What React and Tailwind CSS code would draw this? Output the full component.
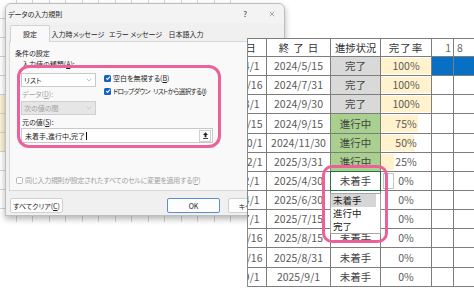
import React from 'react';
import { ChevronDown, X } from 'lucide-react';

const rows = [
  { s: '2024/4/1', e: '2024/5/15', st: '完了', p: '100%', bar: 50, blue: true },
  { s: '2024/5/16', e: '2024/7/31', st: '完了', p: '100%', bar: 50 },
  { s: '2024/8/1', e: '2024/9/30', st: '完了', p: '100%', bar: 50 },
  { s: '2024/7/15', e: '2024/9/15', st: '進行中', p: '75%', bar: 37 },
  { s: '2024/10/1', e: '2024/11/30', st: '進行中', p: '50%', bar: 33 },
  { s: '2024/12/1', e: '2025/3/31', st: '進行中', p: '25%', bar: 13 },
  { s: '2025/2/1', e: '2025/4/30', st: '未着手', p: '0%', bar: 0, sel: true },
  { s: '2025/4/1', e: '2025/6/30', st: '', p: '0%', bar: 0 },
  { s: '2025/7/1', e: '2025/7/15', st: '', p: '0%', bar: 0 },
  { s: '2025/7/16', e: '2025/8/15', st: '未着手', p: '0%', bar: 0 },
  { s: '2025/8/16', e: '2025/8/31', st: '未着手', p: '0%', bar: 0 },
  { s: '2025/9/1', e: '2025/9/1', st: '未着手', p: '0%', bar: 0 },
];

const statusBg = { '完了': 'bg-[#d9d9d9]', '進行中': 'bg-[#a9d08e]', '未着手': 'bg-white', '': 'bg-white' };

const Check = ({ on }) =>
  on ? (
    <span className="w-[7px] h-[7px] rounded-[1.5px] bg-[#1062c4] flex items-center justify-center shrink-0">
      <svg width="6" height="6" viewBox="0 0 10 10">
        <path d="M2 5.2 4.2 7.4 8.3 2.8" fill="none" stroke="#fff" strokeWidth="1.7" />
      </svg>
    </span>
  ) : (
    <span className="w-[7px] h-[7px] rounded-[1.5px] border border-[#b8b8b8] bg-white shrink-0" />
  );

const Key = ({ k }) => (
  <>(<span className="underline">{k}</span>)</>
);

const SheetBehind = () => (
  <div className="w-[247px] h-[222px] overflow-hidden shrink-0">
    {Array.from({ length: 12 }).map((_, r) => (
      <div key={r} className="flex h-[19px]">
        {Array.from({ length: 15 }).map((_, c) => (
          <div
            key={c}
            className={`w-[16.5px] shrink-0 border-r border-b border-[#d4d4d4] ${c === 0 && r > 4 && r < 8 ? 'bg-[#fbf1d3]' : 'bg-white'}`}
          />
        ))}
      </div>
    ))}
  </div>
);

const Table = () => (
  <div className="relative z-10 mt-[38px] flex-1 bg-white border-l border-[#8a8a8a] text-[10.5px] text-[#5a5a5a]">
    <div className="flex h-[19px] border-y border-[#7d7d7d] text-[#333] text-[10.5px]">
      <div className="w-[19px] shrink-0 border-r border-[#7d7d7d] overflow-hidden flex items-center">
        <div className="w-[58px] ml-[-39px] shrink-0 text-center tracking-[4px]">開始日</div>
      </div>
      <div className="w-[64px] shrink-0 border-r border-[#7d7d7d] flex items-center justify-center tracking-[4px] pl-[4px]">終了日</div>
      <div className="w-[50px] shrink-0 border-r border-[#7d7d7d] flex items-center justify-center tracking-[-0.3px]">進捗状況</div>
      <div className="w-[51px] shrink-0 border-r border-[#7d7d7d] flex items-center justify-center tracking-[1px]">完了率</div>
      <div className="w-[22px] shrink-0 border-r border-[#7d7d7d] flex items-center justify-end pr-[2px] text-[#666]">1</div>
      <div className="flex-1 flex items-center pl-[3px] text-[#666]">8</div>
    </div>
    {rows.map((r, i) => (
      <div key={i} className="flex h-[19.15px] border-b border-[#7d7d7d]">
        <div className="w-[19px] shrink-0 border-r border-[#7d7d7d] overflow-hidden flex items-center">
          <div className="w-[58px] ml-[-39px] shrink-0 text-center">{r.s}</div>
        </div>
        <div className="w-[64px] shrink-0 border-r border-[#7d7d7d] flex items-center justify-center">{r.e}</div>
        <div className={`relative w-[50px] shrink-0 border-r border-[#7d7d7d] flex items-center justify-center text-[#444] ${statusBg[r.st]}`}>
          {r.st}
          {r.sel && (
            <>
              <div className="absolute inset-[-1px] border-[1.5px] border-[#217346]" />
              <div className="absolute left-[52px] top-[1px] w-[11px] h-[16px] border border-[#c4c4c4] bg-white" />
            </>
          )}
        </div>
        <div className="relative w-[51px] shrink-0 border-r border-[#7d7d7d] flex items-center justify-center">
          {r.bar > 0 && (
            <div className="absolute left-0 top-[1px] bottom-[1px] bg-[#fff2cc]" style={{ width: r.bar }} />
          )}
          <span className="relative">{r.p}</span>
        </div>
        <div className={`w-[22px] shrink-0 border-r border-[#7d7d7d] ${r.blue ? 'bg-[#0870c4]' : ''}`} />
        <div className={`flex-1 ${r.blue ? 'bg-[#0870c4]' : ''}`} />
      </div>
    ))}
  </div>
);

const Dialog = () => (
  <div className="absolute left-[5px] top-[3px] w-[280px] h-[213px] bg-[#f0f0f0] border border-[#bdbdbd] rounded-t-[6px] shadow-[0_3px_6px_rgba(0,0,0,0.3)] text-[7px] leading-[10px] text-[#1f1f1f] [font-feature-settings:'palt']">
    <div className="h-[19px] flex items-center pl-[2px] bg-[#f3f3f3] rounded-t-[6px]">
      <span>データの入力規則</span>
      <div className="ml-auto flex items-center gap-[21px] pr-[8px] text-[#333]">
        <span className="text-[8px]">?</span>
        <X size={8} strokeWidth={1.3} />
      </div>
    </div>
    <div className="flex items-end h-[18px] pl-[4px]">
      <div className="relative z-10 -mb-px w-[40px] h-[17px] bg-[#f9f9f9] border border-b-0 border-[#d2d2d2] rounded-t-[2px] flex items-center justify-center">設定</div>
      <div className="w-[56px] h-[15px] flex items-center justify-center">入力時メッセージ</div>
      <div className="w-[59px] h-[15px] flex items-center justify-center">エラー メッセージ</div>
      <div className="w-[42px] h-[15px] flex items-center justify-center">日本語入力</div>
    </div>
    <div className="relative mx-[3px] h-[150px] border border-[#d9d9d9] bg-[#f9f9f9]">
      <div className="pl-[5px] pt-[6px]">条件の設定</div>
      <div className="pl-[12px] mt-[1px]">入力値の種類<Key k="A" />:</div>
      <div className="flex mt-[4px] pl-[11px]">
        <div className="w-[75px] shrink-0">
          <div className="h-[14px] bg-white border border-[#c9c9c9] flex items-center pl-[2px]">
            <span>リスト</span>
            <ChevronDown size={8} strokeWidth={1.4} className="ml-auto mr-[2px] text-[#777]" />
          </div>
          <div className="mt-[2px] h-[10px] pl-[1px] text-[#a3a3a3]">データ<Key k="D" />:</div>
          <div className="mt-[2px] h-[14px] bg-[#e6e6e6] border border-[#cfcfcf] flex items-center pl-[2px] text-[#a3a3a3]">
            <span>次の値の間</span>
            <ChevronDown size={8} strokeWidth={1.4} className="ml-auto mr-[2px] text-[#aaa]" />
          </div>
        </div>
        <div className="ml-[8px] flex flex-col gap-[3px]">
          <div className="h-[10px] flex items-center gap-[2px]">
            <Check on />
            <span>空白を無視する<Key k="B" /></span>
          </div>
          <div className="h-[10px] flex items-center gap-[2px] text-[6.6px] tracking-[-0.55px]">
            <Check on />
            <span>ドロップダウン</span>
            <span className="ml-[1px]">リストから選択する<Key k="I" /></span>
          </div>
        </div>
      </div>
      <div className="pl-[12px] mt-[2px]">元の値<Key k="S" />:</div>
      <div className="ml-[11px] mt-[1px] w-[192px] h-[15px] bg-white border border-[#c9c9c9] flex items-center pl-[3px]">
        <span>未着手,進行中,完了</span>
        <span className="w-px h-[8px] bg-[#111] ml-[1px]" />
        <div className="ml-auto mr-px w-[12px] h-[12px] border border-[#d0d0d0] bg-[#fafafa] flex items-center justify-center">
          <svg width="5" height="7" viewBox="0 0 6 8">
            <path d="M3 0 6 3.5H4.1V6H1.9V3.5H0Z" fill="#222" />
            <rect x="0" y="7" width="6" height="1" fill="#222" />
          </svg>
        </div>
      </div>
      <div className="mt-[32px] pl-[6px] flex items-center gap-[2px] h-[10px] text-[#a0a0a0] tracking-[-0.3px]">
        <Check />
        <span>同じ入力規則が設定されたすべてのセルに変更を適用する<Key k="P" /></span>
      </div>
      <div className="absolute left-[7px] top-[23px] w-[204px] h-[83px] border-[3px] border-[#ec6199] rounded-[12px]" />
    </div>
    <div className="flex mt-[7px] h-[15px] pl-[4px]">
      <div className="w-[53px] bg-[#fdfdfd] border border-[#d0d0d0] rounded-[2px] flex items-center justify-center">すべてクリア<Key k="C" /></div>
      <div className="ml-[104px] w-[53px] bg-[#fdfdfd] border-[1.5px] border-[#5b8fd0] rounded-[2px] flex items-center justify-center">OK</div>
      <div className="ml-[8px] w-[53px] bg-[#fdfdfd] border border-[#d0d0d0] rounded-[2px] flex items-center justify-center">キャンセル</div>
    </div>
  </div>
);

export default function App() {
  return (
    <div className="relative w-[474px] h-[288px] overflow-hidden bg-white font-['Noto_Sans_CJK_JP',sans-serif]">
      <div className="flex items-start">
        <SheetBehind />
        <Table />
      </div>
      <Dialog />
      <div className="absolute z-20 left-[330px] top-[193px] w-[51px] h-[41px] bg-white border border-[#a6a6a6] text-[9.5px] leading-[13px] text-[#1a1a1a]">
        <div className="bg-[#d6d6d6] pl-[2px] mr-[4px]">未着手</div>
        <div className="pl-[2px]">進行中</div>
        <div className="pl-[2px]">完了</div>
      </div>
      <div className="absolute z-30 left-[322px] top-[165px] w-[66px] h-[78px] border-[3px] border-[#ec6199] rounded-[10px]" />
    </div>
  );
}
